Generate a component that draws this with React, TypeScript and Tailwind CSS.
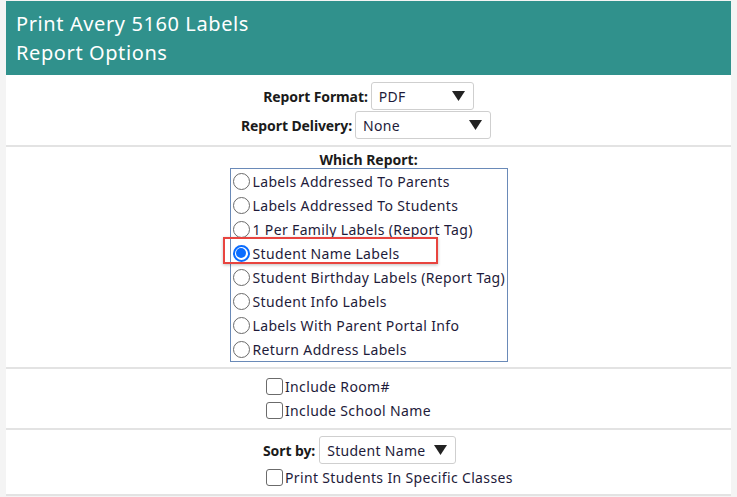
import React from "react";

const font = { fontFamily: '"Noto Sans", "Liberation Sans", sans-serif' };

function Select({ value, w }: { value: string; w: string }) {
  return (
    <div className={`flex h-[28px] items-center justify-between rounded-[3px] border border-[#cfcfcf] bg-white pl-[7px] pr-[8px] text-[14px] tracking-[0.3px] text-[#1e1b3a] ${w}`}>
      <span>{value}</span>
      <svg width="13" height="10" viewBox="0 0 13 10"><path d="M0 0h13L6.5 10z" fill="#222" /></svg>
    </div>
  );
}

function Radio({ checked }: { checked?: boolean }) {
  return checked ? (
    <span className="flex h-[17px] w-[17px] shrink-0 items-center justify-center rounded-full border-[2px] border-[#0a6cff] bg-white">
      <span className="h-[10px] w-[10px] rounded-full bg-[#0a6cff]" />
    </span>
  ) : (
    <span className="h-[17px] w-[17px] shrink-0 rounded-full border border-[#6b6b6b] bg-white" />
  );
}

function Check() {
  return <span className="mr-[2px] h-[17px] w-[17px] shrink-0 rounded-[3px] border border-[#6b6b6b] bg-white" />;
}

const reports = [
  "Labels Addressed To Parents",
  "Labels Addressed To Students",
  "1 Per Family Labels (Report Tag)",
  "Student Name Labels",
  "Student Birthday Labels (Report Tag)",
  "Student Info Labels",
  "Labels With Parent Portal Info",
  "Return Address Labels",
];

export default function App() {
  return (
    <div className="min-h-[497px] w-[737px] bg-[#f4f4f4] pl-[6px] pr-[6px] pt-[1px]" style={font}>
      <div className="bg-white">
        <div className="h-[74px] bg-[#30918c] px-[10px] pt-[8px] text-[20px] leading-[29px] tracking-[0.6px] text-white">
          <div>Print Avery 5160 Labels</div>
          <div>Report Options</div>
        </div>
        <div className="flex flex-col items-center gap-[1px] border-b-2 border-[#e3e3e3] pb-[6px] pt-[7px] text-[14px]">
          <div className="flex items-center gap-[3px]">
            <span className="font-bold tracking-[-0.1px] text-[#1b1b1b]">Report Format:</span>
            <Select value="PDF" w="w-[103px]" />
          </div>
          <div className="flex items-center gap-[3px] pr-[5px]">
            <span className="font-bold tracking-[-0.1px] text-[#1b1b1b]">Report Delivery:</span>
            <Select value="None" w="w-[136px]" />
          </div>
        </div>
        <div className="flex flex-col items-center border-b-2 border-[#e3e3e3] pb-[5px] pt-[5px] text-[14px]">
          <div className="font-bold leading-[16px] text-[#1b1b1b]">Which Report:</div>
          <div className="relative w-[278px] border border-[#6a8ab8]">
            {reports.map((r, i) => (
              <div key={r} className="flex h-[24px] items-center gap-[3px] pl-[2px] tracking-[0.35px] text-[#1e1b3a]">
                <Radio checked={i === 3} />
                <span className="whitespace-nowrap">{r}</span>
              </div>
            ))}
            <div className="pointer-events-none absolute left-[-8px] top-[68px] h-[27px] w-[215px] border-2 border-[#e8443f] shadow-[0_1px_3px_rgba(0,0,0,0.25)]" />
          </div>
        </div>
        <div className="flex flex-col border-b-2 border-[#e3e3e3] pb-[6px] pl-[260px] pt-[5px] text-[14px] tracking-[0.35px] text-[#1e1b3a]">
          <div className="flex h-[24px] items-center"><Check /><span>Include Room#</span></div>
          <div className="flex h-[24px] items-center"><Check /><span>Include School Name</span></div>
        </div>
        <div className="flex flex-col gap-[1px] border-b-2 border-[#e3e3e3] pb-[5px] pl-[257px] pt-[6px] text-[14px] text-[#1e1b3a]">
          <div className="flex items-center gap-[4px]">
            <span className="font-bold tracking-[-0.1px] text-[#1b1b1b]">Sort by:</span>
            <Select value="Student Name" w="w-[137px]" />
          </div>
          <div className="flex h-[24px] items-center pl-[3px] tracking-[0.35px]"><Check /><span>Print Students In Specific Classes</span></div>
        </div>
      </div>
    </div>
  );
}
